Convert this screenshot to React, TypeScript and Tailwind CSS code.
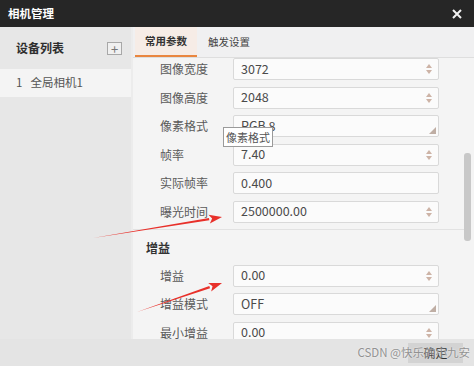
import { FC } from "react";

type Row = { label: string; value: string; kind: "spin" | "select" | "none" };

const imageRows: Row[] = [
  { label: "图像宽度", value: "3072", kind: "spin" },
  { label: "图像高度", value: "2048", kind: "spin" },
  { label: "像素格式", value: "RGB 8", kind: "select" },
  { label: "帧率", value: "7.40", kind: "spin" },
  { label: "实际帧率", value: "0.400", kind: "none" },
  { label: "曝光时间", value: "2500000.00", kind: "spin" },
];

const gainRows: Row[] = [
  { label: "增益", value: "0.00", kind: "spin" },
  { label: "增益模式", value: "OFF", kind: "select" },
  { label: "最小增益", value: "0.00", kind: "spin" },
];

const Spinner = () => (
  <svg width="8" height="12" viewBox="0 0 8 12" className="absolute right-[5px] top-1/2 -translate-y-1/2">
    <path d="M4 1 L7 5 L1 5 Z" fill="#cdb3a6" />
    <path d="M4 11 L7 7 L1 7 Z" fill="#cdb3a6" />
  </svg>
);

const SelectCorner = () => (
  <svg width="7" height="7" viewBox="0 0 7 7" className="absolute right-[2px] bottom-[2px]">
    <path d="M7 0 L7 7 L0 7 Z" fill="#bfaea4" />
  </svg>
);

const ParamRow: FC<{ row: Row }> = ({ row }) => (
  <div className="flex items-center">
    <span className="w-[73px] pl-[27px] box-content shrink-0 text-[12px] text-[#5a5a5a]">{row.label}</span>
    <div className="relative w-[206px] h-[22px] bg-[#fbfbfb] border border-[#d9d9d9] rounded-[2px] flex items-center pl-[7px] text-[12.5px] text-[#4a4a4a]">
      {row.value}
      {row.kind === "spin" && <Spinner />}
      {row.kind === "select" && <SelectCorner />}
    </div>
  </div>
);

const Arrow: FC<{ x1: number; y1: number; x2: number; y2: number }> = ({ x1, y1, x2, y2 }) => {
  const dx = x2 - x1;
  const dy = y2 - y1;
  const len = Math.hypot(dx, dy);
  const ux = dx / len;
  const uy = dy / len;
  const nx = -uy;
  const ny = ux;
  const hl = 13;
  const hw = 4.5;
  const bx = x2 - ux * hl;
  const by = y2 - uy * hl;
  const head = `${x2},${y2} ${bx + nx * hw},${by + ny * hw} ${bx + ux * 3},${by + uy * 3} ${bx - nx * hw},${by - ny * hw}`;
  const body = `${x1},${y1} ${bx + nx * 1.2},${by + ny * 1.2} ${bx - nx * 1.2},${by - ny * 1.2}`;
  return (
    <g fill="#e8302a">
      <polygon points={body} />
      <polygon points={head} />
    </g>
  );
};

export default function App() {
  return (
    <div
      className="relative w-[474px] h-[366px] overflow-hidden flex flex-col bg-[#f4f4f4]"
      style={{ fontFamily: '"Noto Sans CJK SC", "Noto Sans", sans-serif' }}
    >
      {/* title bar */}
      <div className="h-[27px] shrink-0 bg-[#262626] flex items-center justify-between pl-[8px] pr-[12px]">
        <span className="text-white font-bold text-[11.5px]">相机管理</span>
        <svg width="10" height="10" viewBox="0 0 10 10">
          <path d="M1 1 L9 9 M9 1 L1 9" stroke="#f2f2f2" strokeWidth="2" />
        </svg>
      </div>

      <div className="flex-1 flex min-h-0">
        {/* device list */}
        <div className="w-[131px] shrink-0 bg-[#e7e7e7] flex flex-col">
          <div className="h-[42px] flex items-center justify-between pl-[16px] pr-[9px]">
            <span className="font-bold text-[12px] text-[#2e2e2e]">设备列表</span>
            <div className="w-[15px] h-[13px] border border-[#a8a8a8] bg-[#f0f0f0] flex items-center justify-center text-[#777] text-[13px] leading-none">
              +
            </div>
          </div>
          <div className="h-[28px] bg-[#f4f4f4] flex items-center pl-[16px] text-[11.5px] text-[#555]">
            <span className="mr-[8px]">1</span>
            <span>全局相机1</span>
          </div>
        </div>

        {/* params */}
        <div className="flex-1 flex flex-col min-w-0 border-l-2 border-[#ececec]">
          <div className="h-[31px] shrink-0 bg-[#f0f0f1] border-b border-[#dedede] flex items-stretch pl-[2px]">
            <div className="w-[62px] bg-[#f6ece6] border-b-2 border-[#e9863f] flex items-center justify-center font-bold text-[10.5px] text-[#333]">
              常用参数
            </div>
            <div className="px-[11px] flex items-center text-[10.5px] text-[#444]">触发设置</div>
          </div>

          <div className="relative flex-1 overflow-hidden">
            <div className="flex flex-col gap-[6.5px]">
              {imageRows.map((r) => (
                <ParamRow key={r.label} row={r} />
              ))}
            </div>
            <div className="mt-[6px] mr-[8px] border-t border-[#e2e2e2]" />
            <div className="pl-[13px] pt-[10px] pb-[9px] font-bold text-[12px] text-[#333] leading-[16px]">增益</div>
            <div className="flex flex-col gap-[6.5px]">
              {gainRows.map((r) => (
                <ParamRow key={r.label} row={r} />
              ))}
            </div>

            {/* scrollbar */}
            <div className="absolute right-[3px] top-[95px] w-[7px] h-[88px] rounded-[3px] bg-[#c8c8c8]" />

            {/* tooltip */}
            <div className="absolute left-[90px] top-[69px] w-[50px] h-[20px] bg-white border border-[#9a9a9a] flex items-center justify-center text-[11px] text-[#555]">
              像素格式
            </div>
          </div>
        </div>
      </div>

      {/* footer */}
      <div className="h-[27px] shrink-0 bg-[#e4e4e4] flex items-center justify-end pr-[11px]">
        <div className="w-[55px] h-[20px] bg-[#d3d3d3] flex items-center justify-center text-[12px] text-[#333]">确定</div>
      </div>

      <div className="absolute right-[4px] bottom-[5px] text-[11.5px] text-[#8a8a8a] opacity-90 pointer-events-none [text-shadow:0_0_2px_#fff]">
        CSDN @快乐的小九安
      </div>

      <svg className="absolute inset-0 pointer-events-none" width="474" height="366">
        <Arrow x1={93} y1={238} x2={222} y2={217} />
        <Arrow x1={137} y1={312} x2={222} y2={283} />
      </svg>
    </div>
  );
}
